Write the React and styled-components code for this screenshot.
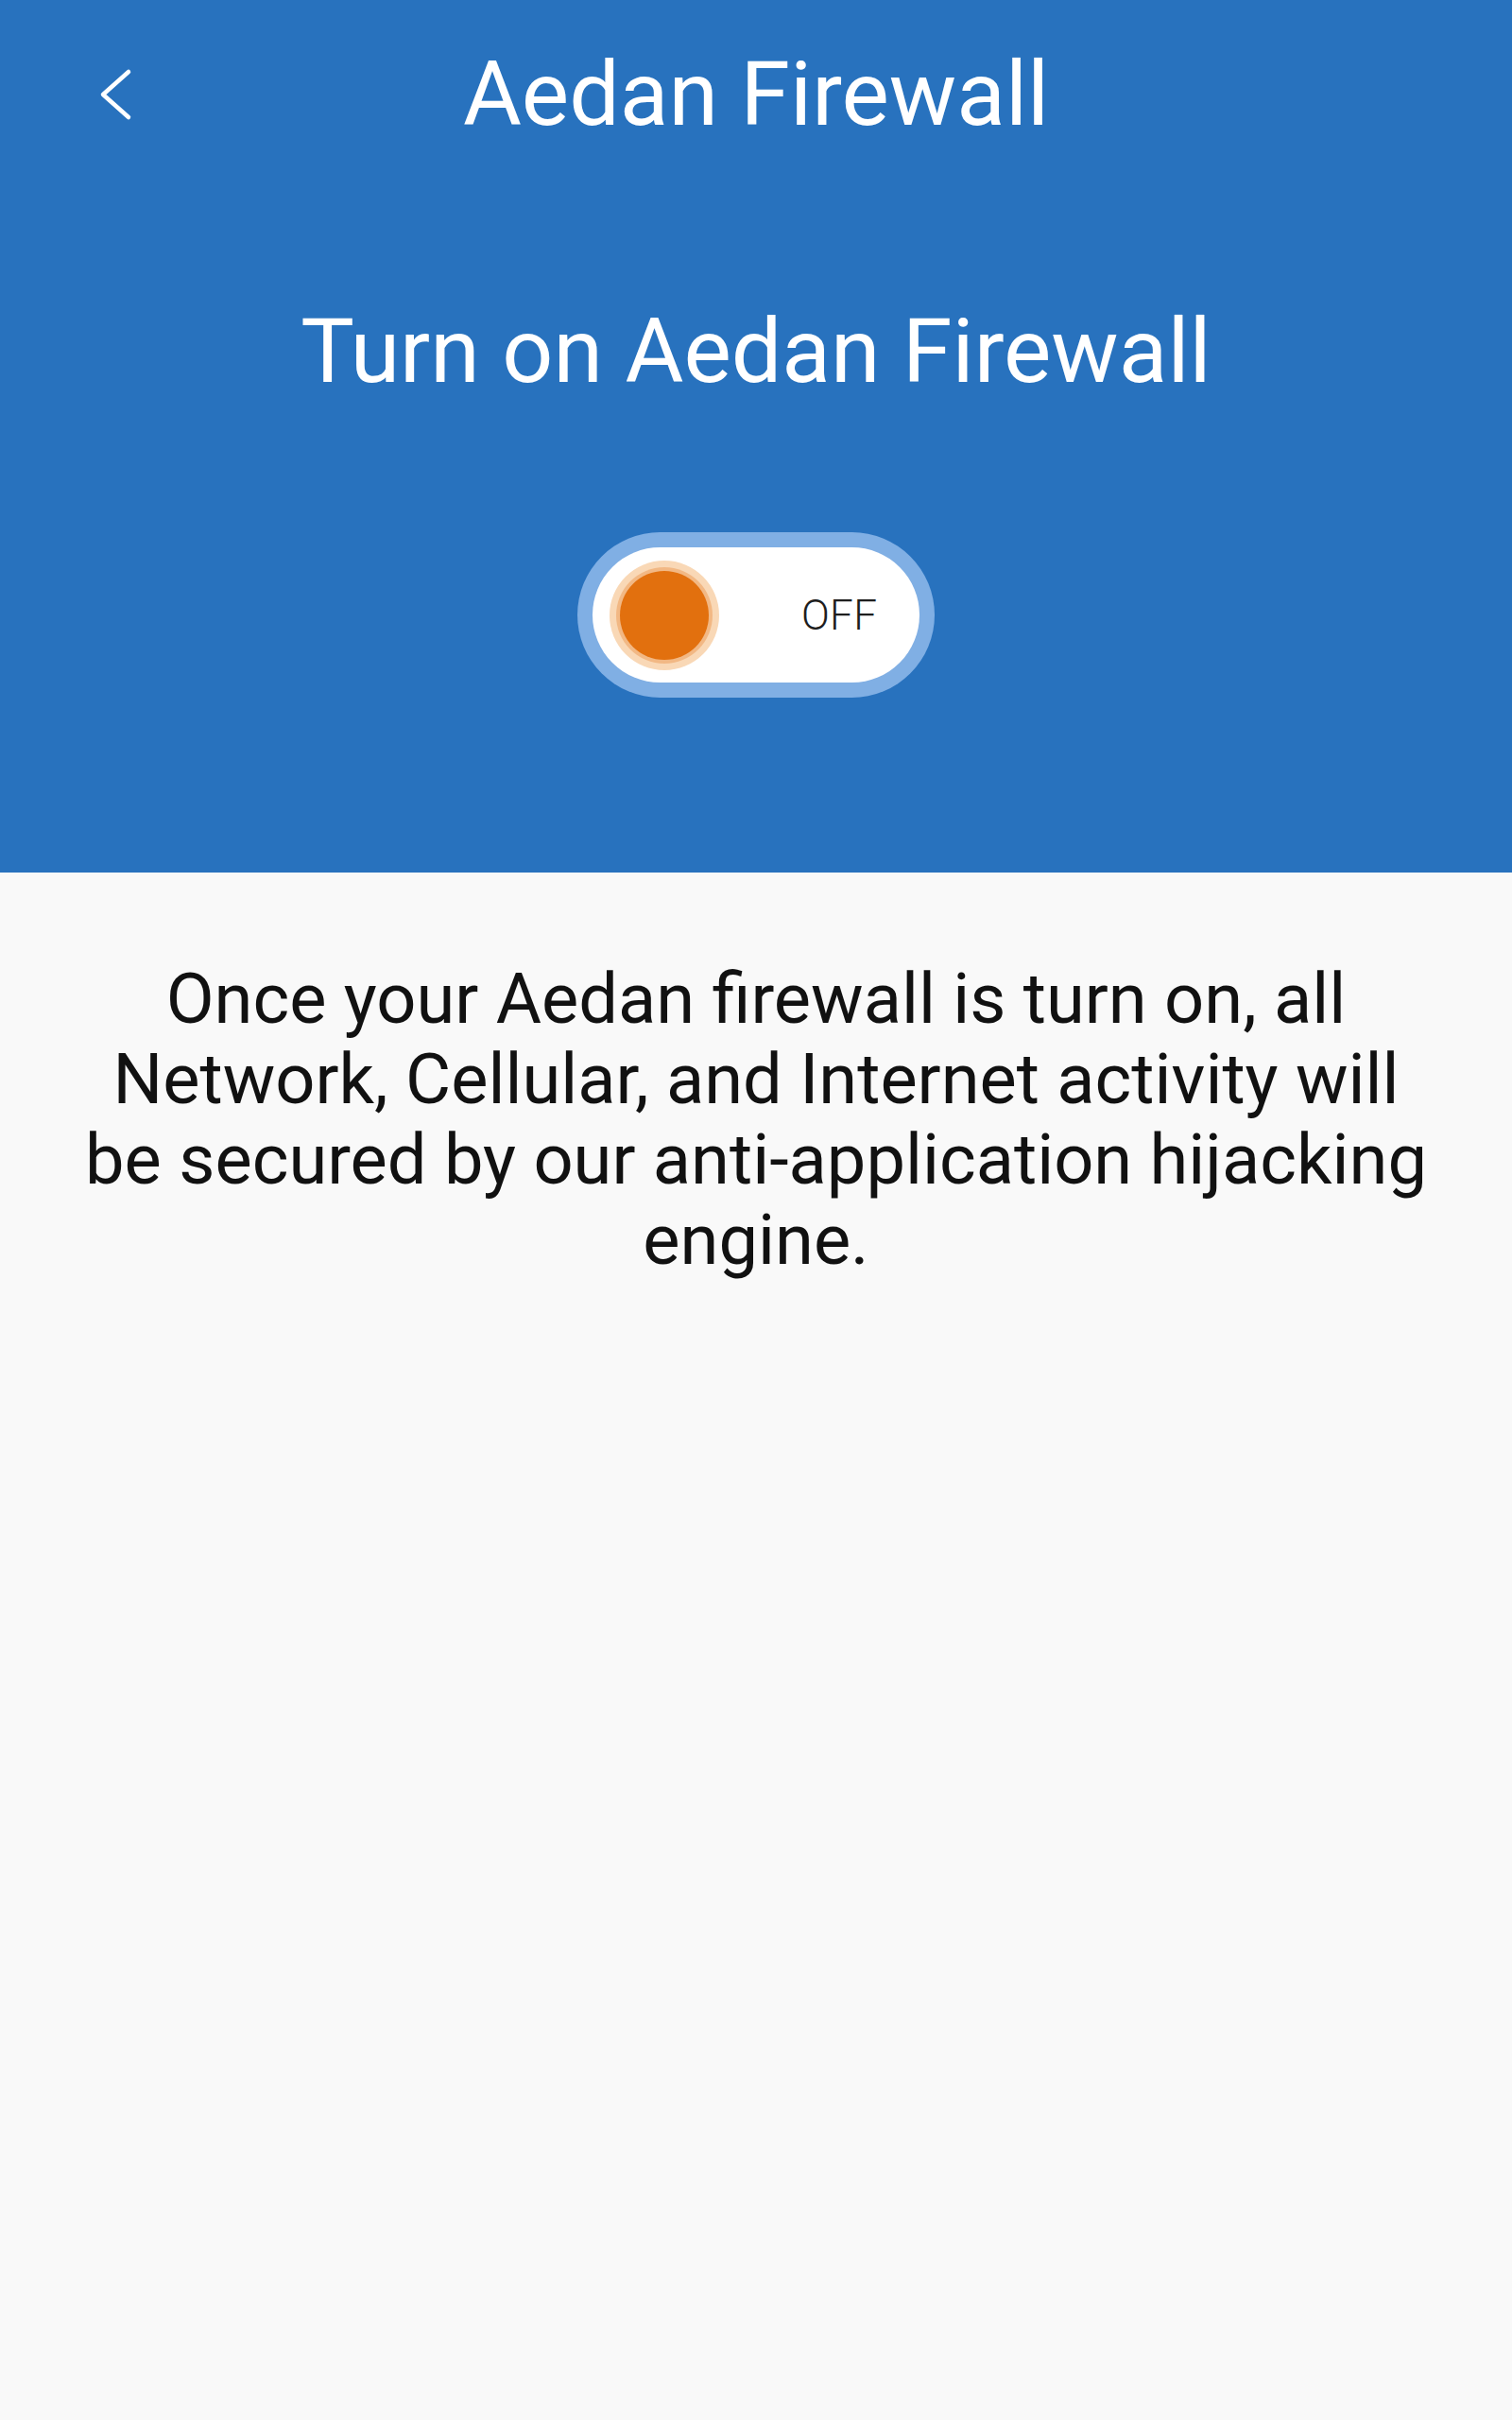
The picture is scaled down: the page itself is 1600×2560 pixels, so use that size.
import React from "react";
import styled, { createGlobalStyle } from "styled-components";

const Global = createGlobalStyle`
  html, body { margin: 0; padding: 0; background: #f9f9f9; }
  body { font-family: Roboto, "Noto Sans", "Liberation Sans", sans-serif; }
  * { box-sizing: border-box; }
`;

const Page = styled.div`
  width: 1600px;
  min-height: 2560px;
  background: #f9f9f9;
  display: flex;
  flex-direction: column;
`;

const Header = styled.header`
  background: #2872be;
  padding: 52px 0 185px;
  display: flex;
  flex-direction: column;
  align-items: center;
`;

const NavRow = styled.div`
  width: 100%;
  height: 96px;
  display: grid;
  grid-template-columns: 1fr auto 1fr;
  align-items: center;
`;

const BackButton = styled.button`
  justify-self: start;
  margin-left: 105px;
  padding: 0;
  border: 0;
  background: transparent;
  width: 36px;
  height: 56px;
  display: flex;
  align-items: center;
  justify-content: center;
  cursor: pointer;
`;

const Title = styled.h1`
  margin: 0;
  font-size: 95px;
  line-height: 96px;
  font-weight: 400;
  color: #ffffff;
  white-space: nowrap;
`;

const Headline = styled.h2`
  margin: 176px 0 0;
  font-size: 95px;
  line-height: 96px;
  font-weight: 400;
  color: #ffffff;
  text-align: center;
`;

const ToggleRing = styled.div`
  margin-top: 143px;
  padding: 16px;
  border-radius: 100px;
  background: #80afe4;
`;

const Track = styled.div`
  width: 346px;
  height: 143px;
  border-radius: 72px;
  background: #ffffff;
  display: flex;
  align-items: center;
  padding-left: 29px;
`;

const Knob = styled.div`
  width: 94px;
  height: 94px;
  border-radius: 50%;
  background: ${(p) => (p.$on ? "#2ea043" : "#e2700e")};
  box-shadow: 0 0 0 4px #f2b884, 0 0 0 11px #f9d8b6;
  flex-shrink: 0;
`;

const StateLabel = styled.span`
  margin-left: 98px;
  font-size: 44px;
  font-weight: 300;
  letter-spacing: 0.3px;
  color: #1e1e1e;
  line-height: 1;
`;

const Body = styled.main`
  padding: 91px 80px 0;
  display: flex;
  justify-content: center;
`;

const Description = styled.p`
  margin: 0;
  font-size: 74px;
  line-height: 85px;
  color: #111111;
  text-align: center;
`;

function Chevron() {
  return (
    <svg width="36" height="56" viewBox="0 0 36 56" fill="none">
      <polyline
        points="31,4 4,28 31,52"
        stroke="#ffffff"
        strokeWidth="4.5"
        strokeLinecap="round"
        strokeLinejoin="round"
      />
    </svg>
  );
}

export default function App() {
  const on = false;
  return (
    <>
      <Global />
      <Page>
        <Header>
          <NavRow>
            <BackButton aria-label="Back">
              <Chevron />
            </BackButton>
            <Title>Aedan Firewall</Title>
            <span />
          </NavRow>
          <Headline>Turn on Aedan Firewall</Headline>
          <ToggleRing>
            <Track>
              <Knob $on={on} />
              <StateLabel>{on ? "ON" : "OFF"}</StateLabel>
            </Track>
          </ToggleRing>
        </Header>
        <Body>
          <Description>
            Once your Aedan firewall is turn on, all Network, Cellular, and
            Internet activity will be secured by our anti-application hijacking
            engine.
          </Description>
        </Body>
      </Page>
    </>
  );
}
